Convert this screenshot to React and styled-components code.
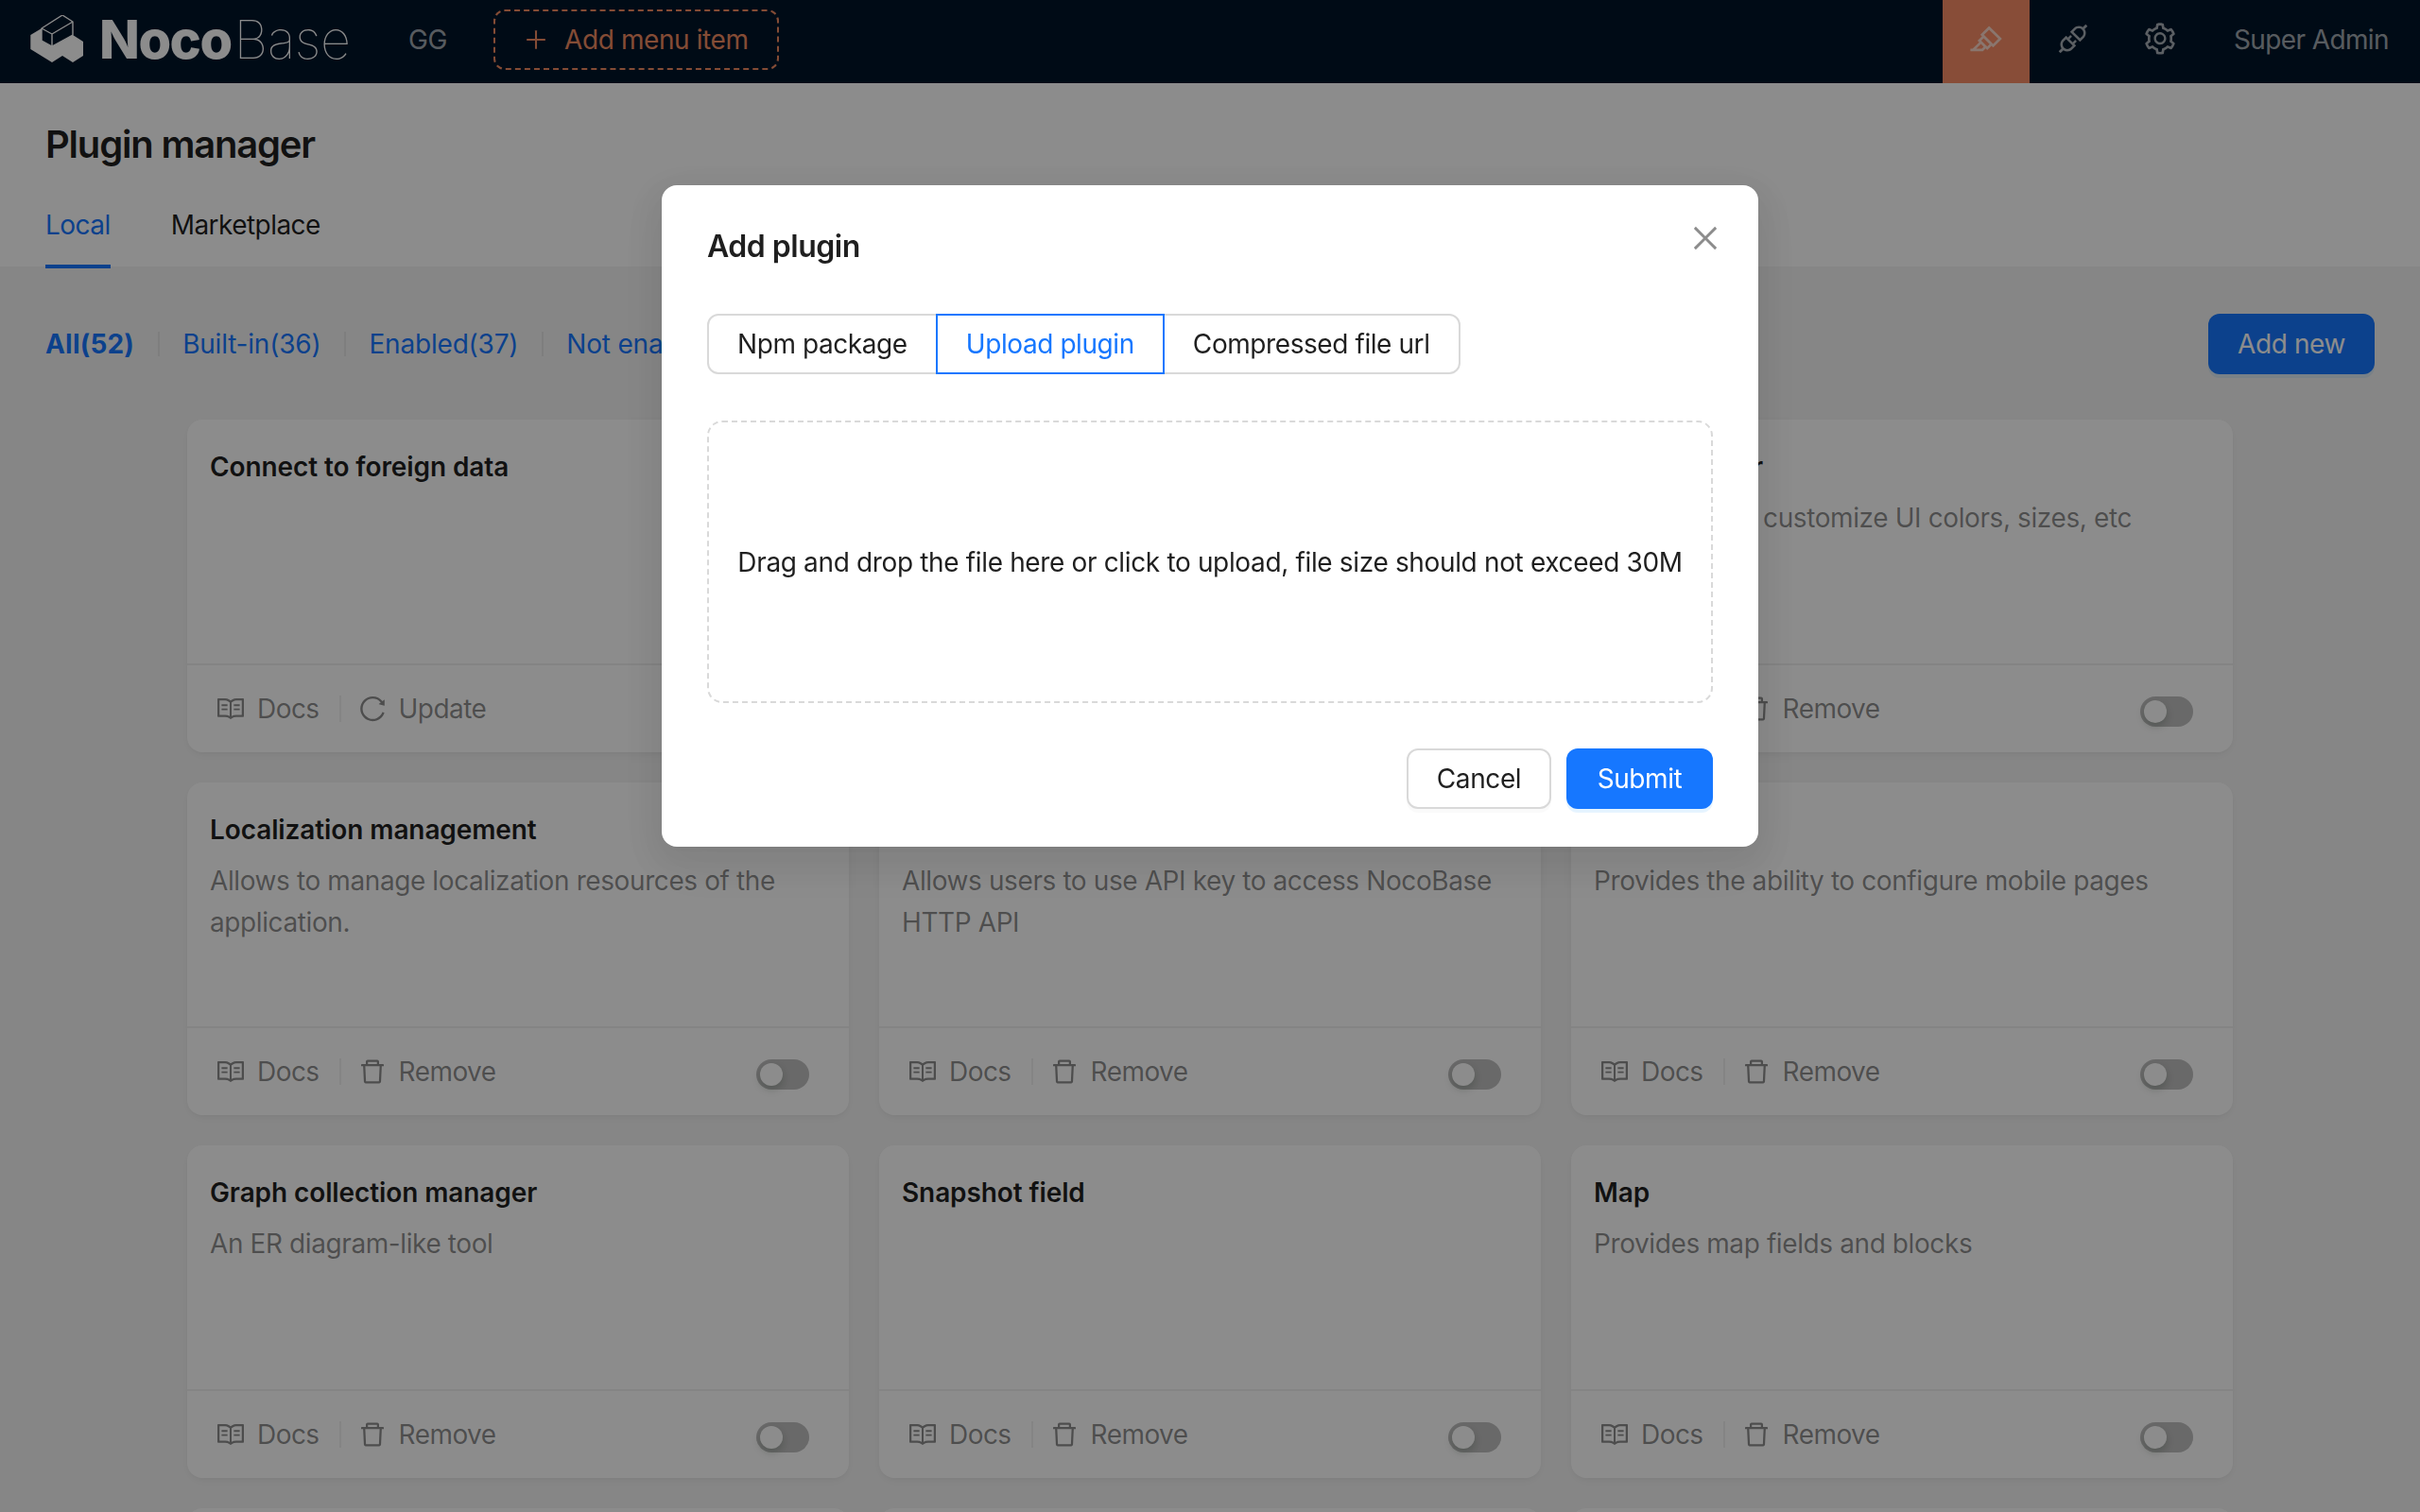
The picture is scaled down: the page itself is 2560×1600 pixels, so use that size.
import React from 'react';
import styled, { createGlobalStyle } from 'styled-components';
import {
  AiOutlineApi,
  AiOutlineClose,
  AiOutlineDelete,
  AiOutlineHighlight,
  AiOutlinePlus,
  AiOutlineRead,
  AiOutlineReload,
  AiOutlineSetting,
} from 'react-icons/ai';

const GlobalStyle = createGlobalStyle`
  html, body {
    margin: 0;
    padding: 0;
    background: #f5f5f5;
    overflow: hidden;
  }
  body {
    font-family: Inter, "Liberation Sans", sans-serif;
    font-size: 28px;
    line-height: 44px;
    letter-spacing: -0.4px;
    color: rgba(0, 0, 0, 0.88);
  }
  * {
    box-sizing: border-box;
  }
`;

const Page = styled.div`
  height: 1600px;
  overflow: hidden;
  display: flex;
  flex-direction: column;
`;

const TopBar = styled.header`
  height: 88px;
  flex: none;
  background: #001529;
  display: flex;
  align-items: stretch;
  color: rgba(255, 255, 255, 0.65);
`;

const TopBarLeft = styled.div`
  display: flex;
  align-items: center;
  padding-bottom: 4px;
`;

const LogoWrap = styled.div`
  display: flex;
  align-items: center;
  width: 432px;
  padding-left: 32px;
`;

const LogoMark = styled.svg`
  width: 57px;
  height: 52px;
  flex: none;
`;

const LogoWord = styled.div`
  margin-left: 16px;
  font-size: 56px;
  line-height: 64px;
  letter-spacing: -1.5px;
  color: #fff;
`;

const LogoBold = styled.span`
  font-weight: 800;
`;

const LogoThin = styled.span`
  font-weight: 100;
  margin-left: 3px;
  letter-spacing: -0.5px;
`;

const AppName = styled.div`
  width: 90px;
`;

const AddMenuButton = styled.div`
  height: 64px;
  display: flex;
  align-items: center;
  gap: 16px;
  padding: 0 30px 0 29px;
  border: 2px dashed #f18b62;
  border-radius: 12px;
  color: #f18b62;
`;

const TopActions = styled.div`
  margin-left: auto;
  display: flex;
  align-items: center;
`;

const TopAction = styled.div`
  width: 92px;
  height: 100%;
  display: flex;
  align-items: center;
  justify-content: center;
  font-size: 38px;
  padding-bottom: 6px;
  background: ${(props) => (props.$active ? '#f78d66' : 'transparent')};
`;

const UserName = styled.div`
  padding: 0 33px 0 32px;
  margin-bottom: 4px;
  letter-spacing: -0.6px;
`;

const PageHeader = styled.div`
  flex: none;
  background: #fff;
  padding: 43px 48px 0;
  box-shadow: inset 0 -2px 0 rgba(0, 0, 0, 0.04);
`;

const PageTitle = styled.h1`
  margin: 0 0 17px;
  font-size: 40px;
  line-height: 44px;
  font-weight: 600;
  letter-spacing: -1.2px;
`;

const Tabs = styled.div`
  display: flex;
  gap: 64px;
  letter-spacing: -0.55px;
`;

const Tab = styled.div`
  padding: 24px 0 20px;
  border-bottom: 4px solid ${(props) => (props.$active ? '#1677ff' : 'transparent')};
  color: ${(props) => (props.$active ? '#1677ff' : 'rgba(0, 0, 0, 0.88)')};
`;

const Content = styled.main`
  padding: 48px;
`;

const FilterRow = styled.div`
  display: flex;
  align-items: center;
  height: 64px;
  margin-bottom: 48px;
`;

const Filter = styled.a`
  color: #1677ff;
  font-weight: ${(props) => (props.$active ? 700 : 400)};
  letter-spacing: ${(props) => (props.$active ? '0.2px' : '-0.2px')};
`;

const FilterSep = styled.span`
  width: 2px;
  height: 26px;
  margin: 0 24.5px;
  background: rgba(0, 0, 0, 0.06);
`;

const AddNewButton = styled.button`
  margin-left: auto;
  width: 176px;
  height: 64px;
  border: none;
  border-radius: 12px;
  background: #1677ff;
  color: #fff;
  font: inherit;
  letter-spacing: inherit;
  box-shadow: 0 4px 0 rgba(5, 145, 255, 0.1);
`;

const CardGrid = styled.div`
  width: 2164px;
  margin: 0 auto;
  display: grid;
  grid-template-columns: repeat(3, 700px);
  grid-auto-rows: 352px;
  gap: 32px;
`;

const Card = styled.article`
  background: #fff;
  border-radius: 16px;
  display: flex;
  flex-direction: column;
  box-shadow: 0 2px 4px rgba(0, 0, 0, 0.03), 0 4px 12px rgba(0, 0, 0, 0.03);
`;

const CardBody = styled.div`
  flex: 1;
  padding: 28px 24px 0;
`;

const CardTitle = styled.div`
  font-weight: 600;
  letter-spacing: -0.1px;
  margin-bottom: 10px;
  min-height: 44px;
`;

const CardDesc = styled.div`
  color: rgba(0, 0, 0, 0.45);
`;

const CardFooter = styled.div`
  height: 94px;
  flex: none;
  border-top: 2px solid rgba(0, 0, 0, 0.06);
  display: flex;
  align-items: center;
  padding: 0 42px 0 30px;
  color: rgba(0, 0, 0, 0.45);
  letter-spacing: -0.55px;
`;

const FooterAction = styled.span`
  display: inline-flex;
  align-items: center;
  gap: 12px;
  svg {
    font-size: 32px;
  }
`;

const FooterSep = styled.span`
  width: 2px;
  height: 28px;
  margin: 0 17px 0 21px;
  background: rgba(0, 0, 0, 0.06);
`;

const Switch = styled.span`
  margin-left: auto;
  margin-top: 6px;
  width: 56px;
  height: 32px;
  padding: 4px;
  border-radius: 16px;
  background: rgba(0, 0, 0, 0.25);
`;

const SwitchKnob = styled.span`
  display: block;
  width: 24px;
  height: 24px;
  border-radius: 50%;
  background: #fff;
  box-shadow: 0 4px 8px rgba(0, 35, 11, 0.2);
`;

const Mask = styled.div`
  position: fixed;
  inset: 0;
  background: rgba(0, 0, 0, 0.45);
  display: flex;
  justify-content: center;
  align-items: flex-start;
  padding-top: 196px;
`;

const Modal = styled.div`
  position: relative;
  width: 1160px;
  height: 700px;
  padding: 43px 48px 40px;
  background: #fff;
  border-radius: 16px;
  box-shadow: 0 12px 32px 16px rgba(0, 0, 0, 0.05), 0 6px 12px -8px rgba(0, 0, 0, 0.08),
    0 18px 56px 8px rgba(0, 0, 0, 0.05);
`;

const ModalTitle = styled.h2`
  margin: 0 0 49px;
  font-size: 32px;
  line-height: 44px;
  font-weight: 600;
  letter-spacing: -0.5px;
`;

const CloseButton = styled.span`
  position: absolute;
  top: 38px;
  right: 38px;
  font-size: 36px;
  line-height: 0;
  color: rgba(0, 0, 0, 0.45);
`;

const SourceTabs = styled.div`
  display: flex;
  margin-bottom: 49px;
  letter-spacing: -0.42px;
`;

const SourceTab = styled.div`
  height: 64px;
  padding: 0 30px;
  display: flex;
  align-items: center;
  margin-left: -2px;
  border: 2px solid ${(props) => (props.$active ? '#1677ff' : '#d9d9d9')};
  color: ${(props) => (props.$active ? '#1677ff' : 'rgba(0, 0, 0, 0.88)')};
  position: relative;
  z-index: ${(props) => (props.$active ? 1 : 0)};

  &:first-child {
    margin-left: 0;
    border-radius: 12px 0 0 12px;
  }
  &:last-child {
    border-radius: 0 12px 12px 0;
  }
`;

const DropZone = styled.div`
  height: 299px;
  margin-bottom: 48px;
  display: flex;
  align-items: center;
  justify-content: center;
  border: 2px dashed #d9d9d9;
  border-radius: 16px;
  letter-spacing: -0.35px;
`;

const ModalFooter = styled.div`
  display: flex;
  justify-content: flex-end;
  gap: 16px;
`;

const ModalButton = styled.button`
  width: ${(props) => (props.$primary ? '155px' : '153px')};
  height: 64px;
  border-radius: 12px;
  font: inherit;
  letter-spacing: inherit;
  border: ${(props) => (props.$primary ? 'none' : '2px solid #d9d9d9')};
  background: ${(props) => (props.$primary ? '#1677ff' : '#fff')};
  color: ${(props) => (props.$primary ? '#fff' : 'rgba(0, 0, 0, 0.88)')};
  box-shadow: 0 4px 0 ${(props) => (props.$primary ? 'rgba(5, 145, 255, 0.1)' : 'rgba(0, 0, 0, 0.02)')};
`;

const plugins = [
  { title: 'Connect to foreign data', update: true },
  { title: 'File manager', desc: 'Provides files storage services' },
  { title: 'Theme editor', desc: 'Allows you to customize UI colors, sizes, etc' },
  { title: 'Localization management', desc: 'Allows to manage localization resources of the application.' },
  { title: 'API keys', desc: 'Allows users to use API key to access NocoBase HTTP API' },
  { title: 'Mobile client', desc: 'Provides the ability to configure mobile pages' },
  { title: 'Graph collection manager', desc: 'An ER diagram-like tool' },
  { title: 'Snapshot field' },
  { title: 'Map', desc: 'Provides map fields and blocks' },
];

const Logo = () => (
  <LogoMark viewBox="12 12 57 52">
    <polygon
      fill="#fff"
      points="12.3,33 24,26 24,39 35,45 57,33 68,40 68,55 57,62 46,55 35,62 12.3,48"
    />
    <path
      d="M24 26 46 12 57 19 35 32ZM24 26V39L35 45V32M35 45 57 33V19"
      fill="none"
      stroke="#fff"
      strokeWidth="1.4"
      strokeLinejoin="round"
    />
  </LogoMark>
);

const PluginCard = ({ plugin }) => (
  <Card>
    <CardBody>
      <CardTitle>{plugin.title}</CardTitle>
      <CardDesc>{plugin.desc}</CardDesc>
    </CardBody>
    <CardFooter>
      <FooterAction>
        <AiOutlineRead />
        Docs
      </FooterAction>
      <FooterSep />
      {plugin.update ? (
        <FooterAction>
          <AiOutlineReload />
          Update
        </FooterAction>
      ) : (
        <FooterAction>
          <AiOutlineDelete />
          Remove
        </FooterAction>
      )}
      {!plugin.update && (
        <Switch>
          <SwitchKnob />
        </Switch>
      )}
    </CardFooter>
  </Card>
);

const App = () => (
  <>
    <GlobalStyle />
    <Page>
      <TopBar>
        <TopBarLeft>
          <LogoWrap>
            <Logo />
            <LogoWord>
              <LogoBold>Noco</LogoBold>
              <LogoThin>Base</LogoThin>
            </LogoWord>
          </LogoWrap>
          <AppName>GG</AppName>
          <AddMenuButton>
            <AiOutlinePlus />
            Add menu item
          </AddMenuButton>
        </TopBarLeft>
        <TopActions>
          <TopAction $active>
            <AiOutlineHighlight />
          </TopAction>
          <TopAction>
            <AiOutlineApi />
          </TopAction>
          <TopAction>
            <AiOutlineSetting />
          </TopAction>
          <UserName>Super Admin</UserName>
        </TopActions>
      </TopBar>

      <PageHeader>
        <PageTitle>Plugin manager</PageTitle>
        <Tabs>
          <Tab $active>Local</Tab>
          <Tab>Marketplace</Tab>
        </Tabs>
      </PageHeader>

      <Content>
        <FilterRow>
          <Filter $active>All(52)</Filter>
          <FilterSep />
          <Filter>Built-in(36)</Filter>
          <FilterSep />
          <Filter>Enabled(37)</Filter>
          <FilterSep />
          <Filter>Not enabled(15)</Filter>
          <AddNewButton>Add new</AddNewButton>
        </FilterRow>
        <CardGrid>
          {plugins.map((plugin, i) => (
            <PluginCard key={i} plugin={plugin} />
          ))}
          <Card />
          <Card />
          <Card />
        </CardGrid>
      </Content>
    </Page>

    <Mask>
      <Modal>
        <ModalTitle>Add plugin</ModalTitle>
        <CloseButton>
          <AiOutlineClose />
        </CloseButton>
        <SourceTabs>
          <SourceTab>Npm package</SourceTab>
          <SourceTab $active>Upload plugin</SourceTab>
          <SourceTab>Compressed file url</SourceTab>
        </SourceTabs>
        <DropZone>Drag and drop the file here or click to upload, file size should not exceed 30M</DropZone>
        <ModalFooter>
          <ModalButton>Cancel</ModalButton>
          <ModalButton $primary>Submit</ModalButton>
        </ModalFooter>
      </Modal>
    </Mask>
  </>
);

export default App;
